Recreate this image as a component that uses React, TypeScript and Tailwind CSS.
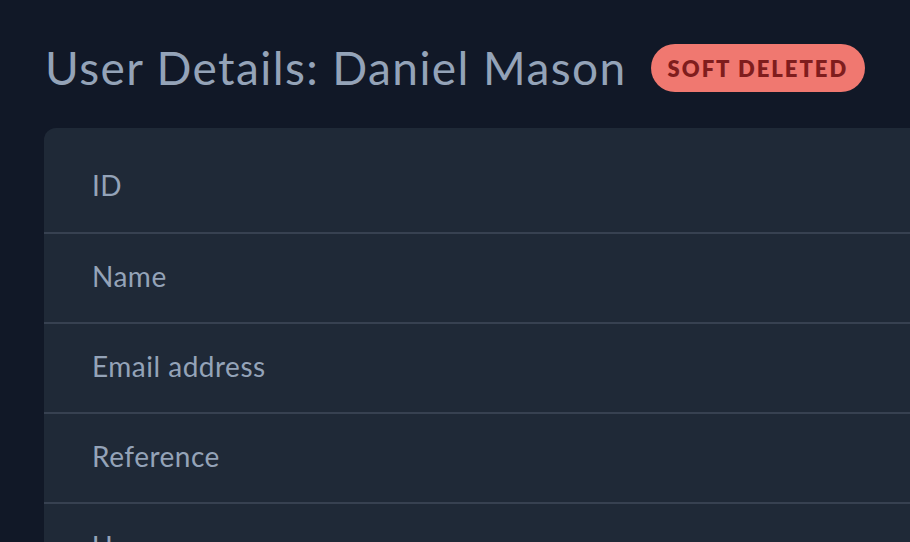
import React from "react";

const rows = ["ID", "Name", "Email address", "Reference", "Username"];

export default function App() {
  return (
    <div
      className="w-[910px] h-[542px] overflow-hidden bg-[#111827] pl-[44px]"
      style={{ fontFamily: "Lato, 'Noto Sans', sans-serif" }}
    >
      <div className="flex items-center h-[128px] pt-[8px]">
        <h1 className="ml-[1px] text-[46px] leading-[54px] tracking-[1.4px] font-normal text-[#94a3b8]">
          User Details: Daniel Mason
        </h1>
        <span className="ml-[24px] h-[48px] flex items-center rounded-full bg-[#f07870] px-[17px] text-[22px] tracking-[2px] font-extrabold text-[#7f1d1d]">
          SOFT DELETED
        </span>
      </div>
      <div className="w-[1000px] rounded-[12px] bg-[#1f2937] pt-[14px]">
        {rows.map((r, i) => (
          <div
            key={r}
            className={`h-[90px] flex items-center px-[48px] pb-[4px] text-[28px] tracking-[0.5px] text-[#94a3b8] ${
              i > 0 ? "border-t-[2px] border-[#374151]" : ""
            }`}
          >
            {r}
          </div>
        ))}
      </div>
    </div>
  );
}
